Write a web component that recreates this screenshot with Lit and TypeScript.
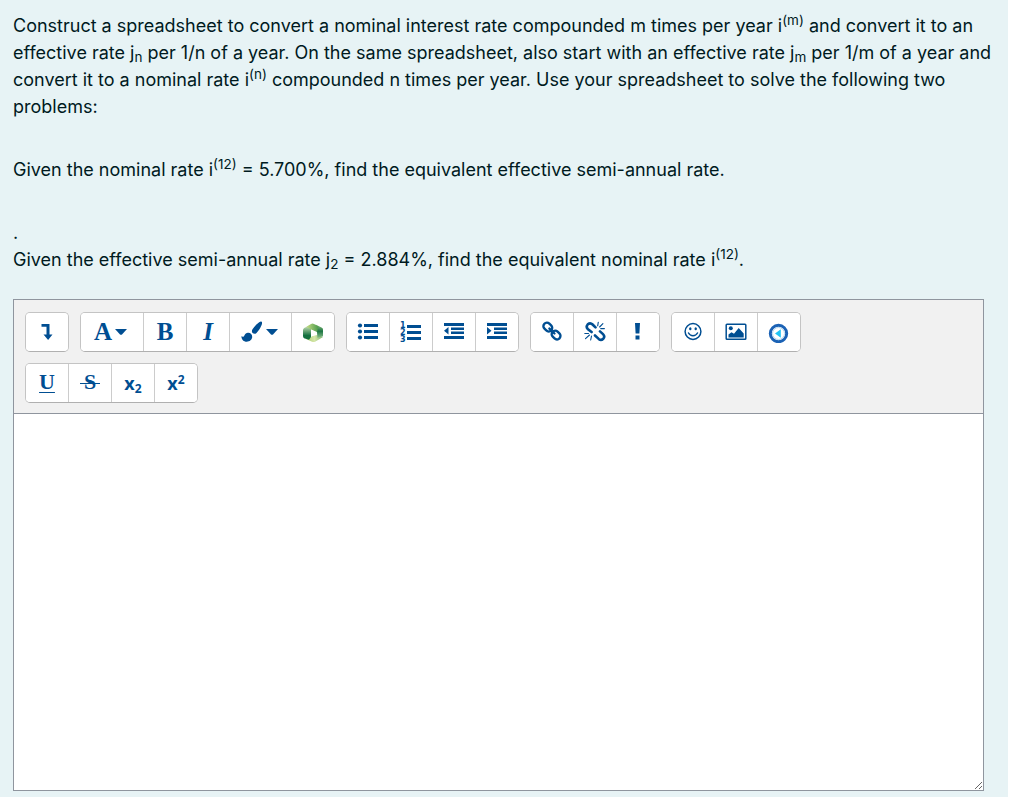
import { LitElement, html, css, svg } from "lit";
import { customElement } from "lit/decorators.js";

const icon = (body: unknown, size = 22) =>
  html`<svg width=${size} height=${size} viewBox="0 0 22 22" aria-hidden="true">${body}</svg>`;

const caret = html`<svg width="12" height="6" viewBox="0 0 12 6" aria-hidden="true"><path d="M0 0h12L7 5.4q-1 .8-2 0z" /></svg>`;

const toggle = icon(svg`<path d="M5.500 3h8v10.400h3L12.100 19 7.500 13.400h3V5.800h-5z"/>`);

const brush = icon(svg`
  <path d="M20.600.8c.9.700.4 2.400-.2 3.600-1.100 2.500-2.900 5.500-4.900 7.500-1.200 1.200-2.900 1.100-3.900.1s-.9-2.700.1-4C13.300 5.600 15.600 3.100 18.200 1.300c.9-.6 1.800-.9 2.400-.5z"/>
  <path d="M6.900 11.800c2.500-.2 4.500 1.700 4.300 4.200-.2 2.700-2.500 4.700-5.500 4.700-3.100 0-5.200-2.200-5.300-5.500 1.500.9 2.300.6 3.100-1 .7-1.500 1.800-2.300 3.400-2.400z"/>`);

const hexagon = icon(svg`
  <defs>
    <linearGradient id="ga" x1="0" x2="1" y1="0" y2="0"><stop offset="0" stop-color="#c5dc83"/><stop offset="1" stop-color="#4a9a4c"/></linearGradient>
    <linearGradient id="gb" x1="0" x2="0" y1="0" y2="1"><stop offset="0" stop-color="#8fc07c"/><stop offset=".5" stop-color="#1c7544"/><stop offset="1" stop-color="#8cc08a"/></linearGradient>
    <linearGradient id="gc" x1="0" x2="1" y1="0" y2="0"><stop offset="0" stop-color="#a9cc6d"/><stop offset=".5" stop-color="#d5e6a8"/><stop offset="1" stop-color="#7fb56a"/></linearGradient>
    <linearGradient id="gd" x1="0" x2="0" y1="0" y2="1"><stop offset="0" stop-color="#d5e8bc"/><stop offset=".7" stop-color="#14703f"/></linearGradient>
  </defs>
  <path fill="url(#gc)" d="m7 16 8-2 6 2-7.500 4.500q-1.700 1-3.500.2L4 18z"/>
  <path fill="url(#gd)" d="M1 9q0-1.400 1.200-2.100L7 4.500 9 8v8l-2 2.800-5-1.500Q1 16.500 1 15z"/>
  <path fill="url(#gb)" d="m13.500 3.600 6.500 3.200q1 .6 1 2v6.500L15.500 17l-.5-5z"/>
  <path fill="url(#ga)" d="M4.500 5.700 9 3q1.500-.8 3 0l4.500 2.500L15 11 9 8.400z"/>
  <path fill="#fff" d="m9 8.400 6.400 3.700L9 15.800z"/>`);

const bullets = icon(svg`
  <circle cx="3" cy="4.500" r="2.100"/><circle cx="3" cy="10.500" r="2.100"/><circle cx="3" cy="16.500" r="2.100"/>
  <path d="M7 3h14v3H7zM7 9h14v3H7zM7 15h14v3H7z"/>`);

const numbers = icon(svg`
  <path d="M7 4h14v3H7zM7 10h14v3H7zM7 16h14v3H7z"/>
  <text class="digit" x="0" y="7">1</text><text class="digit" x="0" y="14">2</text><text class="digit" x="0" y="21">3</text>`);

const outdent = icon(svg`<path d="M1 2h20v3H1zM8 6.500h13v2.500H8zM8 10.500h13V13H8zM1 15h20v3H1zM5.500 6v7.500L1 9.800z"/>`);
const indent = icon(svg`<path d="M1 2h20v3H1zM8 6.500h13v2.500H8zM8 10.500h13V13H8zM1 15h20v3H1zM1 6v7.500l4.500-3.700z"/>`);

const link = icon(svg`<g class="line" stroke-width="2.400" transform="rotate(44 11 10)">
  <rect x="0.500" y="6.600" width="9.500" height="7" rx="3.500"/><rect x="12" y="6.600" width="9.500" height="7" rx="3.500"/><path d="M7.500 10.100h7"/></g>`);

const unlink = icon(svg`<g class="line" stroke-width="2.600">
    <path d="M7.600 11 4 8.200Q1.500 5.800 3.800 3.300q2.500-2 4.800.2l2.900 2.900"/>
    <path d="m11 14.500 3.700 3.400q2.300 2 4.600-.2 2-2.400-.3-4.600L16 10.400"/></g>
  <g class="line" stroke-width="1.100"><path d="m13.700 4.800.6-3.600M15.600 6l3.300-3.300M16.700 7.600h3.700M7.500 15l-.8 4M5.500 14l-4 3.600M4.500 12.500H.8"/></g>`);

const bang = icon(svg`<path d="M8 2h5l-.6 10.500H8.600zM8.500 14.500h4v4h-4z"/>`);

const smile = icon(svg`<circle class="line" cx="11" cy="10.500" r="7.900" stroke-width="1.500"/>
  <ellipse cx="8.300" cy="7.700" rx="1.200" ry="1.500"/><ellipse cx="13.700" cy="7.700" rx="1.200" ry="1.500"/>
  <path class="line" stroke-width="1.500" d="M6.500 12q1.500 2.700 4.500 2.700t4.500-2.700"/>`);

const picture = icon(svg`<rect class="line" x="1.200" y="3.200" width="19.600" height="15" rx=".8" stroke-width="1.500"/>
  <circle cx="5.800" cy="7.200" r="2"/><path d="M3.500 16.500v-3l3-2.300 2.500 1.600L13.700 7l5 5.500v4z"/>`);

const recorder = icon(svg`<circle cx="10.500" cy="12.500" r="8.200" fill="#fff" stroke="#1b62b5" stroke-width="3"/>
  <circle cx="10.500" cy="12.500" r="6" fill="none" stroke="#b4d6ef" stroke-width="1"/>
  <path fill="#20c4f4" d="M12.800 8.300v8.400L7 12.500z"/>`);

interface Tool {
  label: string;
  face: unknown;
  wide?: boolean;
}

const groups: Tool[][] = [
  [{ label: "Show more buttons", face: toggle }],
  [
    { label: "Paragraph styles", face: html`<span class="serif">A</span>${caret}`, wide: true },
    { label: "Bold", face: html`<span class="serif">B</span>` },
    { label: "Italic", face: html`<span class="serif italic">I</span>` },
    { label: "Font colour", face: html`${brush}${caret}`, wide: true },
    { label: "Insert video", face: hexagon },
  ],
  [
    { label: "Unordered list", face: bullets },
    { label: "Ordered list", face: numbers },
    { label: "Outdent", face: outdent },
    { label: "Indent", face: indent },
  ],
  [
    { label: "Link", face: link },
    { label: "Unlink", face: unlink },
    { label: "Prevent automatic links", face: bang },
  ],
  [
    { label: "Emoji picker", face: smile },
    { label: "Insert image", face: picture },
    { label: "Record media", face: recorder },
  ],
  [
    { label: "Underline", face: html`<span class="serif small under">U</span>` },
    { label: "Strike through", face: html`<span class="serif small strike">S</span>` },
    { label: "Subscript", face: html`<span class="script">x<sub>2</sub></span>` },
    { label: "Superscript", face: html`<span class="script">x<sup>2</sup></span>` },
  ],
];

@customElement("rich-editor")
export class RichEditor extends LitElement {
  static styles = css`
    :host {
      display: flex;
      flex-direction: column;
      border: 1px solid #8f959e;
      background: #fff;
    }
    .toolbar {
      display: flex;
      flex-wrap: wrap;
      gap: 11px;
      padding: 12px 11px 10px;
      background: #f1f1f1;
      border-bottom: 1px solid #8f959e;
    }
    .group {
      display: flex;
      border: 1px solid #c4c4c4;
      border-bottom-color: #b0b0b0;
      border-radius: 5px;
      background: #fff;
      overflow: hidden;
    }
    button {
      display: flex;
      align-items: center;
      justify-content: center;
      box-sizing: border-box;
      width: 42px;
      height: 38px;
      margin: 0;
      padding: 0;
      border: 0;
      background: #fff;
      color: #004e92;
      cursor: pointer;
    }
    button + button {
      width: 43px;
      border-left: 1px solid #ccc;
    }
    button.wide {
      width: 62px;
      gap: 3px;
      padding-right: 3px;
    }
    svg {
      flex: none;
      fill: currentColor;
    }
    .line {
      fill: none;
      stroke: currentColor;
      stroke-linecap: round;
    }
    .digit {
      font: bold 8px "DejaVu Sans", sans-serif;
    }
    .serif {
      font: bold 25px/28px "Liberation Serif", serif;
    }
    .italic {
      font-style: italic;
    }
    .small {
      font-size: 22px;
      line-height: 24px;
      padding-bottom: 2px;
    }
    .under {
      text-decoration: underline 1px;
      text-underline-offset: 3px;
    }
    .strike {
      background: linear-gradient(currentColor, currentColor) center / 100% 1px no-repeat;
      padding: 0 4px 2px;
    }
    .script {
      font: bold 18px/24px "Noto Sans", sans-serif;
    }
    .script sub,
    .script sup {
      position: relative;
      font-size: 12px;
      line-height: 0;
      vertical-align: baseline;
    }
    .script sub {
      bottom: -0.25em;
    }
    .script sup {
      top: -0.5em;
    }
    textarea {
      flex: 1;
      min-height: 160px;
      box-sizing: border-box;
      width: 100%;
      margin: 0;
      padding: 8px;
      border: 0;
      outline: 0;
      resize: vertical;
      background: #fff;
      color: #001a1e;
      font: 18px/27px Inter, sans-serif;
    }
  `;

  render() {
    return html`
      <div class="toolbar" role="toolbar" aria-label="Editor">
        ${groups.map(
          (tools) => html`<div class="group">
            ${tools.map(
              (t) => html`<button type="button" class=${t.wide ? "wide" : ""} aria-label=${t.label}>${t.face}</button>`
            )}
          </div>`
        )}
      </div>
      <textarea aria-label="Answer text"></textarea>
    `;
  }
}

@customElement("app-root")
export class AppRoot extends LitElement {
  static styles = css`
    :host {
      display: block;
      padding-right: 16px;
      background: #fff;
    }
    .question {
      display: flex;
      flex-direction: column;
      box-sizing: border-box;
      min-height: 100vh;
      padding: 12px 12px 6px 13px;
      background: #e7f3f5;
      color: #001a1e;
      font: 18px/27px Inter, "Liberation Sans", sans-serif;
    }
    p {
      margin: 0 0 36px;
    }
    .last {
      margin: 0 0 26px;
    }
    sub,
    sup {
      position: relative;
      font-size: 75%;
      line-height: 0;
      vertical-align: baseline;
    }
    sub {
      bottom: -0.25em;
    }
    sup {
      top: -0.5em;
    }
    rich-editor {
      flex: 1;
      margin-right: 12px;
    }
  `;

  render() {
    return html`
      <main class="question">
        <p>
          Construct a spreadsheet to convert a nominal interest rate compounded m times per year i<sup>(m)</sup> and
          convert it to an effective rate j<sub>n</sub> per 1/n of a year. On the same spreadsheet, also start with an
          effective rate j<sub>m</sub> per 1/m of a year and convert it to a nominal rate i<sup>(n)</sup> compounded n
          times per year. Use your spreadsheet to solve the following two problems:
        </p>
        <p>Given the nominal rate i<sup>(12)</sup> = 5.700%, find the equivalent effective semi-annual rate.</p>
        <p class="last">
          .<br />Given the effective semi-annual rate j<sub>2</sub> = 2.884%, find the equivalent nominal rate
          i<sup>(12)</sup>.
        </p>
        <rich-editor></rich-editor>
      </main>
    `;
  }
}
